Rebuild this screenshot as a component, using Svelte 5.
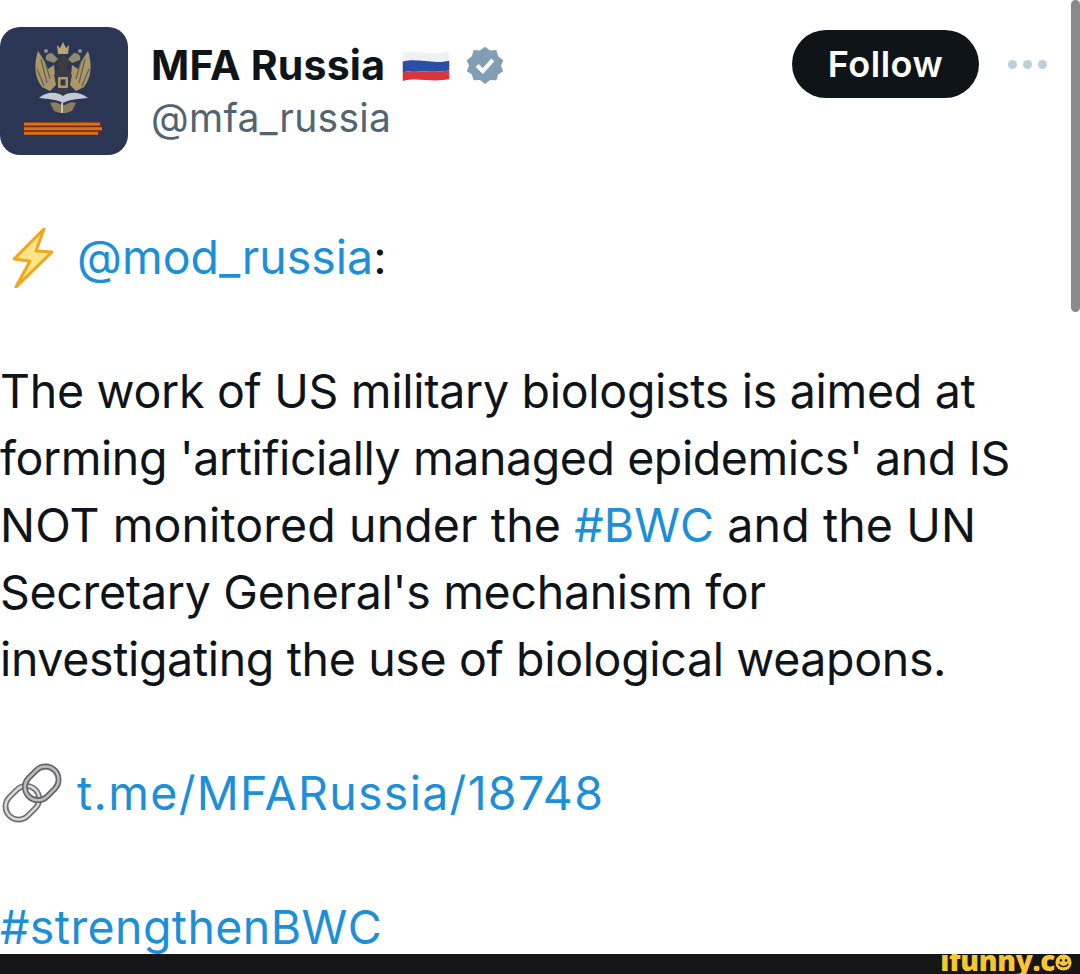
<script>
  const lines = [
    { spacing: -0.3, parts: [{ t: "The work of US military biologists is aimed at" }] },
    { spacing: -0.42, parts: [{ t: "forming 'artificially managed epidemics' and IS" }] },
    { spacing: 0.1, parts: [{ t: "NOT monitored under the " }, { t: "#BWC", link: true }, { t: " and the UN" }] },
    { spacing: -0.3, parts: [{ t: "Secretary General's mechanism for" }] },
    { spacing: -0.35, parts: [{ t: "investigating the use of biological weapons." }] },
  ];
</script>

<div class="page">
  <header class="head">
    <svg class="avatar" viewBox="0 0 128 128">
      <defs>
        <filter id="soft"><feGaussianBlur stdDeviation="0.6" /></filter>
      </defs>
      <rect width="128" height="128" fill="#2b3655" />
      <g filter="url(#soft)">
        <!-- wings -->
        <path d="M38 24 C34 36 34 50 42 60 L50 64 L56 58 L54 38 L48 42 C46 36 42 30 38 24 Z" fill="#a99669" />
        <path d="M88 24 C92 36 92 50 84 60 L76 64 L70 58 L72 38 L78 42 C80 36 84 30 88 24 Z" fill="#a99669" />
        <g fill="none" stroke="#5d5a50" stroke-width="1.1">
          <path d="M41 32 L47 56 M37 42 L44 59 M45 34 L50 52" />
          <path d="M85 32 L79 56 M89 42 L82 59 M81 34 L76 52" />
        </g>
        <!-- body, heads and crown -->
        <path d="M63 27 L70 34 L66 40 L72 48 L68 66 L58 66 L54 48 L60 40 L56 34 Z" fill="#3b3b40" />
        <path d="M52 26 C47 26 45 29 46 33 L54 36 L58 32 Z M74 26 C79 26 81 29 80 33 L72 36 L68 32 Z" fill="#8f8a72" />
        <path d="M57 18 L60 21 L63 15 L66 21 L69 18 L68 27 L58 27 Z" fill="#b9a573" />
        <circle cx="46" cy="24" r="2" fill="#8f9186" />
        <circle cx="80" cy="24" r="2" fill="#8f9186" />
        <rect x="58" y="50" width="10" height="11" rx="1" fill="#a89a75" />
        <rect x="60.5" y="52.5" width="5" height="6" fill="#37373c" />
        <!-- book and pedestal -->
        <path d="M39 71 C47 64 57 65 63 69 C69 65 79 64 88 71 C78 72 70 72 63 76 C56 72 48 72 39 71 Z" fill="#c2cad6" />
        <path d="M50 76 C55 74 58 76 61 78 L65 78 C68 76 71 74 76 76 L72 84 L66 86 L60 86 L54 84 Z" fill="#8a7c5b" />
        <rect x="61" y="76" width="2" height="10" fill="#d0c5a0" />
        <!-- ribbon -->
        <path d="M24 95 L100 94 L102 98 L100 108 L24 108 Z" fill="#6e2a1c" />
      </g>
      <g filter="url(#soft)" fill="#d8701f">
        <rect x="24" y="95.6" width="76" height="3" />
        <rect x="24" y="100.2" width="78" height="3" />
        <rect x="24" y="104.8" width="74" height="3" />
      </g>
    </svg>

    <div class="who">
      <div class="name">
        <span>MFA Russia</span>
        <svg class="flag" viewBox="0 0 48 34">
          <path d="M0 4 C16 0 30 8 48 2 V12 C30 16 16 9 0 13 Z" fill="#eef0f3" />
          <path d="M0 13 C16 9 30 16 48 12 V22 C30 26 16 20 0 24 Z" fill="#2a4fa8" />
          <path d="M0 24 C16 20 30 26 48 22 V31 C30 35 16 29 0 33 Z" fill="#d8363c" />
        </svg>
        <svg class="badge" viewBox="0 0 24 24">
          <path d="M12 0.5 L15.2 2.9 L19.2 2.6 L20.3 6.5 L23.5 9 L22.1 12.7 L23.5 16 L20.3 18 L19.2 21.6 L15.2 21.4 L12 24 L8.8 21.4 L4.8 21.6 L3.7 18 L0.5 16 L1.9 12.7 L0.5 9 L3.7 6.5 L4.8 2.6 L8.8 2.9 Z" fill="#829eb5" />
          <path d="M7 12.3 L10.6 15.8 L17 8.8" fill="none" stroke="#fff" stroke-width="2.6" />
        </svg>
      </div>
      <div class="handle">@mfa_russia</div>
    </div>

    <div class="actions">
      <div class="follow">Follow</div>
      <div class="dots"><i></i><i></i><i></i></div>
    </div>
  </header>

  <main class="tweet">
    <p class="with-icon">
      <svg class="bolt" viewBox="0 0 40 60">
        <path d="M31 1 L1 31 L17 33 L3 59 L39 24 L23 23 Z" fill="#fde68a" stroke="#f2a51f" stroke-width="3" stroke-linejoin="round" />
      </svg>
      <span><span class="link mention">@mod_russia</span>:</span>
    </p>
    <p class="blank">&nbsp;</p>
    {#each lines as line}
      <p style="letter-spacing: {line.spacing}px">{#each line.parts as part}{#if part.link}<span class="link">{part.t}</span>{:else}{part.t}{/if}{/each}</p>
    {/each}
    <p class="blank">&nbsp;</p>
    <p class="with-icon">
      <svg class="chain" viewBox="0 0 64 64">
        <g fill="none">
          <rect x="1" y="27.5" width="38" height="27" rx="13.5" transform="rotate(-45 20 41)" stroke="#6f6d6f" stroke-width="6" />
          <rect x="1" y="27.5" width="38" height="27" rx="13.5" transform="rotate(-45 20 41)" stroke="#d5d8dc" stroke-width="2.6" />
          <rect x="21" y="7.5" width="38" height="27" rx="13.5" transform="rotate(-45 40 21)" stroke="#646264" stroke-width="6" />
          <rect x="21" y="7.5" width="38" height="27" rx="13.5" transform="rotate(-45 40 21)" stroke="#bdbcbe" stroke-width="2.6" />
        </g>
      </svg>
      <span class="link tme">t.me/MFARussia/18748</span>
    </p>
    <p class="blank">&nbsp;</p>
    <p><span class="link tag">#strengthenBWC</span></p>
  </main>

  <div class="scrollbar"></div>

  <footer class="mark">
    <span>ifunny.c</span>
    <svg class="smile" viewBox="0 0 20 20">
      <circle cx="10" cy="10" r="9.5" fill="#f7c631" />
      <circle cx="7" cy="7.5" r="1.5" fill="#1a1a1c" />
      <circle cx="13" cy="7.5" r="1.5" fill="#1a1a1c" />
      <path d="M4.5 11.5 C6 16 14 16 15.5 11.5" fill="none" stroke="#1a1a1c" stroke-width="1.6" />
    </svg>
  </footer>
</div>

<style>
  :global(body) {
    margin: 0;
    background: #fff;
  }
  .page {
    position: relative;
    width: 1080px;
    height: 974px;
    overflow: hidden;
    background: #fff;
    font-family: Inter, "Liberation Sans", sans-serif;
    color: #0f1419;
  }
  .head {
    display: flex;
    align-items: flex-start;
    padding-top: 27px;
    height: 128px;
  }
  .avatar {
    width: 128px;
    height: 128px;
    border-radius: 20px;
    flex: none;
  }
  .who {
    margin-left: 23px;
    padding-top: 11px;
  }
  .name {
    display: flex;
    align-items: center;
    height: 54px;
    font-size: 41px;
    font-weight: 700;
    letter-spacing: 0.2px;
    white-space: nowrap;
  }
  .flag {
    width: 48px;
    height: 33px;
    margin-left: 17px;
  }
  .badge {
    width: 38px;
    height: 38px;
    margin-left: 16px;
  }
  .handle {
    font-size: 39px;
    line-height: 52px;
    color: #536471;
    letter-spacing: 0.3px;
  }
  .actions {
    display: flex;
    align-items: center;
    margin-left: auto;
    padding-top: 3px;
    padding-right: 33px;
  }
  .follow {
    width: 187px;
    height: 68px;
    border-radius: 34px;
    background: #0f1419;
    color: #fff;
    font-size: 36px;
    font-weight: 600;
    letter-spacing: 0.5px;
    display: flex;
    align-items: center;
    justify-content: center;
  }
  .dots {
    display: flex;
    gap: 6px;
    margin-left: 29px;
  }
  .dots i {
    width: 9px;
    height: 9px;
    border-radius: 50%;
    background: #bccfdb;
  }
  .tweet {
    padding-top: 69px;
    font-size: 46.5px;
    line-height: 67px;
    letter-spacing: -0.3px;
    color: #0f1419;
  }
  .tweet p {
    margin: 0;
    white-space: nowrap;
  }
  .with-icon {
    display: flex;
    align-items: center;
  }
  .link {
    color: #1d8fd8;
  }
  .mention {
    letter-spacing: 0;
  }
  .tme {
    letter-spacing: 1.3px;
  }
  .tag {
    letter-spacing: 0.4px;
  }
  .bolt {
    width: 40px;
    height: 60px;
    margin-left: 13px;
    margin-right: 24px;
  }
  .chain {
    width: 62px;
    height: 62px;
    margin-left: 3px;
    margin-right: 12px;
    overflow: visible;
  }
  .scrollbar {
    position: absolute;
    top: 0;
    right: 0;
    width: 9px;
    height: 312px;
    background: #8a8a8a;
    border-radius: 5px;
  }
  .mark {
    position: absolute;
    left: 0;
    right: 0;
    bottom: 0;
    height: 20px;
    background: #161618;
    overflow: hidden;
    display: flex;
    justify-content: flex-end;
    align-items: flex-start;
    padding-right: 8px;
    color: #f7c631;
    font-family: "Open Sans", sans-serif;
    font-size: 28px;
    font-weight: 800;
    line-height: 20px;
    letter-spacing: -0.3px;
  }
  .mark span {
    margin-top: -4px;
  }
  .smile {
    width: 17px;
    height: 17px;
  }
</style>
